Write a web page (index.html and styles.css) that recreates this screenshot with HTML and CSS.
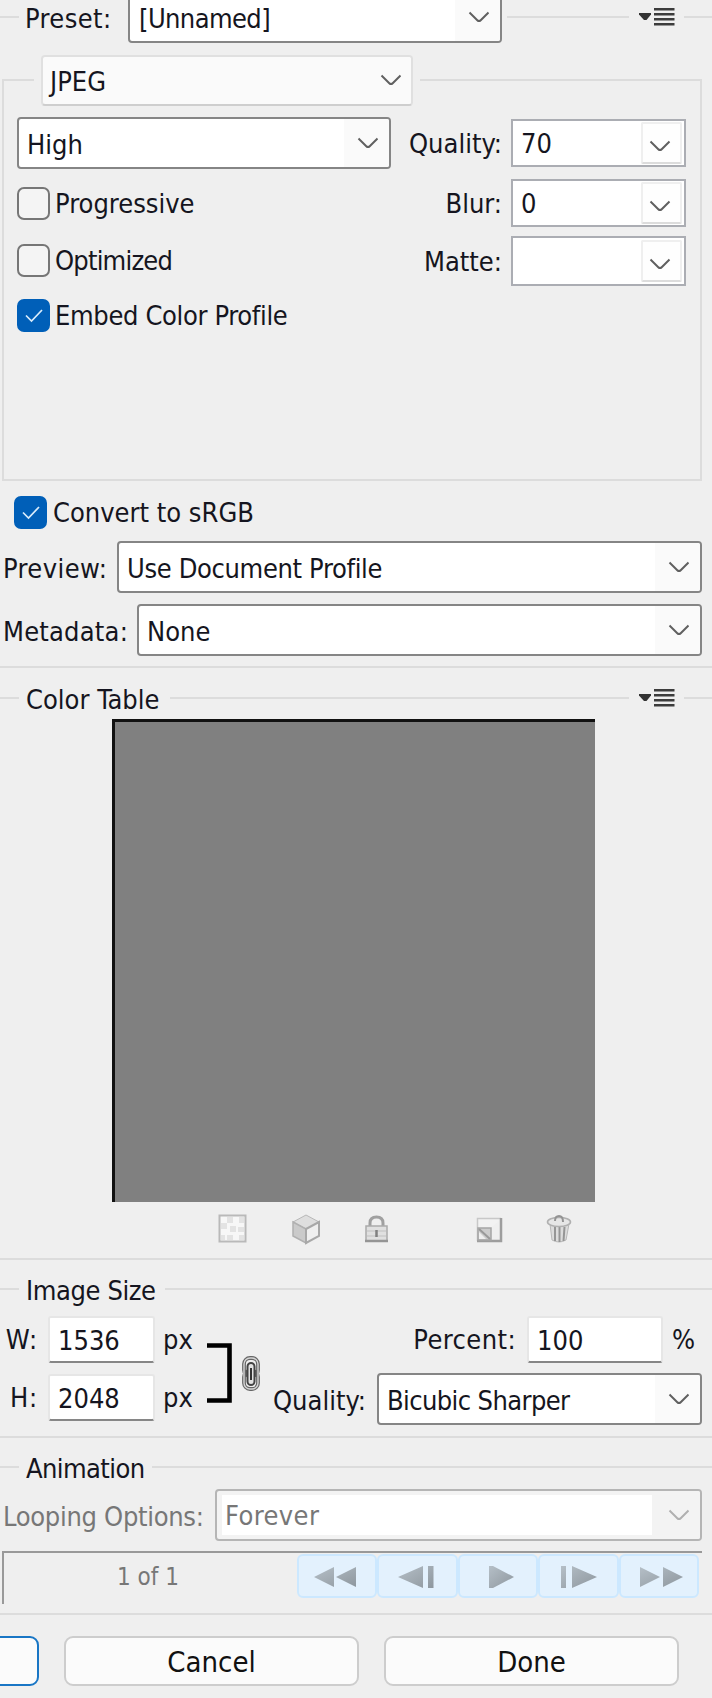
FILE: index.html
```html
<!DOCTYPE html>
<html lang="en">
<head>
    <meta charset="UTF-8">
    <meta name="viewport" content="width=device-width, initial-scale=1.0">
    <title>Save for Web</title>
    <link rel="stylesheet" href="styles.css">
</head>
<body>
    <!-- shared icons -->
    <svg class="defs" width="0" height="0">
        <symbol id="chevron" viewBox="0 0 22 13">
            <path d="M1.5 1.5L9.3 9.2Q11 10.9 12.7 9.2L20.5 1.5" fill="none" stroke="currentColor" stroke-width="2"/>
        </symbol>
        <symbol id="check" viewBox="0 0 18 14">
            <path d="M1 6.5L6.5 12L17 1" fill="none" stroke="#d9ecfb" stroke-width="1.7"/>
        </symbol>
        <symbol id="menu" viewBox="0 0 36 20">
            <path d="M0 6H12V7.5L7.5 13H5L0 7.5Z" fill="#333"/>
            <path d="M15 2.2H35.5M15 7.2H35.5M15 12.2H35.5M15 17.2H35.5" stroke="#3c3c3c" stroke-width="2.6"/>
        </symbol>
        <linearGradient id="metal" x1="0" y1="0" x2="1" y2="1">
            <stop offset="0" stop-color="#b5bfc7"/>
            <stop offset="1" stop-color="#8e979e"/>
        </linearGradient>
    </svg>

    <div class="panel">
        <div class="title-row preset-row">
            <span class="rule rule-start"></span>
            <span class="preset-label">Preset:</span>
            <div class="select preset-select">
                <span class="value">[Unnamed]</span>
                <span class="arrow"><svg><use href="#chevron"/></svg></span>
            </div>
            <span class="rule"></span>
            <svg class="menu-icon"><use href="#menu"/></svg>
            <span class="rule rule-end"></span>
        </div>

        <div class="format-group">
            <div class="format-legend">
                <div class="select flat">
                    <span class="value">JPEG</span>
                    <span class="arrow"><svg><use href="#chevron"/></svg></span>
                </div>
            </div>
            <div class="format-body">
                <div class="format-left">
                    <div class="select">
                        <span class="value">High</span>
                        <span class="arrow"><svg><use href="#chevron"/></svg></span>
                    </div>
                    <div class="check-row progressive"><span class="checkbox"></span><span>Progressive</span></div>
                    <div class="check-row optimized"><span class="checkbox"></span><span>Optimized</span></div>
                    <div class="check-row embed">
                        <span class="checkbox checked"><svg><use href="#check"/></svg></span>
                        <span>Embed Color Profile</span>
                    </div>
                </div>
                <div class="format-right">
                    <div class="spin-row">
                        <span>Quality:</span>
                        <div class="spin"><span>70</span><span class="spin-btn"><svg><use href="#chevron"/></svg></span></div>
                    </div>
                    <div class="spin-row blur-row">
                        <span>Blur:</span>
                        <div class="spin"><span>0</span><span class="spin-btn"><svg><use href="#chevron"/></svg></span></div>
                    </div>
                    <div class="spin-row matte-row">
                        <span>Matte:</span>
                        <div class="spin"><span></span><span class="spin-btn"><svg><use href="#chevron"/></svg></span></div>
                    </div>
                </div>
            </div>
        </div>

        <div class="check-row convert">
            <span class="checkbox checked"><svg><use href="#check"/></svg></span>
            <span>Convert to sRGB</span>
        </div>
        <div class="field-row preview-row">
            <span class="label preview-label">Preview:</span>
            <div class="select">
                <span class="value profile">Use Document Profile</span>
                <span class="arrow"><svg><use href="#chevron"/></svg></span>
            </div>
        </div>
        <div class="field-row metadata-row">
            <span class="label metadata-label">Metadata:</span>
            <div class="select">
                <span class="value">None</span>
                <span class="arrow"><svg><use href="#chevron"/></svg></span>
            </div>
        </div>

        <div class="section color-section">
            <div class="title-row">
                <span class="rule rule-start"></span>
                <span class="title color-title">Color Table</span>
                <span class="rule"></span>
                <svg class="menu-icon"><use href="#menu"/></svg>
                <span class="rule rule-end"></span>
            </div>
            <div class="color-table"></div>
            <div class="table-tools">
                <svg class="tool" width="30" height="32" viewBox="0 0 30 32">
                    <rect x="1.5" y="2.5" width="26" height="26" fill="#f7f7f7" stroke="#b9b9b9" stroke-width="2"/>
                    <path d="M9 4h6v6H9zM21 4h5v6h-5zM3 10h6v6H3zM9 22h6v5H9zM21 22h5v5h-5zM3 22h4v5H3zM12 13h6v6h-6zM20 14h6v5h-6z" fill="#e3e3e3"/>
                </svg>
                <svg class="tool cube" width="30" height="32" viewBox="0 0 30 32">
                    <path d="M15 2L28 9L15 16L2 9Z" fill="#dedede" stroke="#b8b8b8"/>
                    <path d="M2 9L15 16V30L2 23Z" fill="#cacaca" stroke="#b0b0b0" stroke-width="1.5"/>
                    <path d="M15 16L28 9V23L15 30Z" fill="#efefef" stroke="#a8a8a8" stroke-width="2"/>
                </svg>
                <svg class="tool lock" width="26" height="32" viewBox="0 0 26 32">
                    <path d="M6 14V10Q6 4 12.5 4T19 10V14" fill="none" stroke="#a0a0a0" stroke-width="3"/>
                    <rect x="2" y="13" width="21" height="15" fill="#e0e0e0" stroke="#ababab" stroke-width="1.5"/>
                    <path d="M3 18H22M3 23H22" stroke="#cacaca" stroke-width="1.5"/>
                    <path d="M1 28H24" stroke="#959595" stroke-width="2.5"/>
                    <path d="M12.5 17V24" stroke="#808080" stroke-width="2.5"/>
                </svg>
                <svg class="tool new" width="28" height="32" viewBox="0 0 28 32">
                    <path d="M1.5 28V5.5H25" fill="#f2f2f2" stroke="#c8c8c8" stroke-width="1.5"/>
                    <path d="M25 5V28H1" fill="none" stroke="#9d9d9d" stroke-width="2.5"/>
                    <path d="M2 15H15V27H2Z" fill="#ccc" stroke="#a5a5a5" stroke-width="1.5"/>
                    <path d="M3 16L14 26" stroke="#999" stroke-width="2"/>
                    <path d="M3 19V26H10Z" fill="#eee"/>
                </svg>
                <svg class="tool trash" width="26" height="32" viewBox="0 0 26 32">
                    <path d="M4 11L6 27Q13 31 20 27L23 11Z" fill="#dcdcdc" stroke="#b8b8b8"/>
                    <path d="M9 14V28M13.5 14V29M18.500 14L17.500 28" stroke="#959595" stroke-width="2"/>
                    <ellipse cx="13" cy="9" rx="11.5" ry="4.5" fill="#e6e6e6" stroke="#b0b0b0" stroke-width="1.6"/>
                    <path d="M9 8Q9 3 13 3T17 9" fill="none" stroke="#939393" stroke-width="2"/>
                </svg>
            </div>
        </div>

        <div class="section size-section">
            <div class="title-row">
                <span class="rule rule-start"></span>
                <span class="title size-title">Image Size</span>
                <span class="rule"></span>
            </div>
            <div class="size-body">
                <div class="dimensions">
                    <div class="dim-row"><span class="dim-label">W:</span><div class="input">1536</div><span>px</span></div>
                    <div class="dim-row"><span class="dim-label">H:</span><div class="input">2048</div><span>px</span></div>
                </div>
                <svg class="link" width="56" height="66" viewBox="0 0 56 66">
                    <path d="M0 5.500H22.500V60.500H0" fill="none" stroke="#000" stroke-width="4.600"/>
                    <rect x="37" y="18" width="14" height="18" rx="6" fill="none" stroke="#666" stroke-width="3.800"/>
                    <rect x="37" y="31" width="14" height="18" rx="6" fill="none" stroke="#666" stroke-width="3.800"/>
                    <rect x="37" y="18" width="14" height="31" rx="6" fill="none" stroke="#d5d5d5" stroke-width="1.400"/>
                    <rect x="40.500" y="23" width="7" height="22" rx="3.500" fill="#e2e2e2" stroke="#444" stroke-width="2"/>
                    <path d="M44 28V40" stroke="#333" stroke-width="2"/>
                </svg>
                <div class="resample">
                    <div class="percent-row">
                        <span class="percent-label">Percent:</span>
                        <div class="input">100</div>
                        <span class="percent-sign">%</span>
                    </div>
                    <div class="quality-row">
                        <span class="label">Quality:</span>
                        <div class="select">
                            <span class="value sharper">Bicubic Sharper</span>
                            <span class="arrow"><svg><use href="#chevron"/></svg></span>
                        </div>
                    </div>
                </div>
            </div>
        </div>

        <div class="section animation-section">
            <div class="title-row">
                <span class="rule rule-start"></span>
                <span class="title animation-title">Animation</span>
                <span class="rule"></span>
            </div>
            <div class="field-row looping-row">
                <span class="label looping-label">Looping Options:</span>
                <div class="select disabled">
                    <span class="value">Forever</span>
                    <span class="arrow"><svg><use href="#chevron"/></svg></span>
                </div>
            </div>
            <div class="player">
                <span class="frame-count">1 of 1</span>
                <div class="controls">
                    <span class="control"><svg viewBox="0 0 80 44"><path d="M17 22L37 12V32ZM39 22L59 12V32Z"/></svg></span>
                    <span class="control"><svg viewBox="0 0 80 44"><path d="M21 22L46 11V33ZM51 11H56.500V33H51Z"/></svg></span>
                    <span class="control"><svg viewBox="0 0 80 44"><path d="M31 11H35L56 22L35 33H31Z"/></svg></span>
                    <span class="control"><svg viewBox="0 0 80 44"><path d="M23 11H28V33H23ZM34 11L59 22L34 33Z"/></svg></span>
                    <span class="control"><svg viewBox="0 0 80 44"><path d="M21 12L41 22L21 32ZM44 12L64 22L44 32Z"/></svg></span>
                </div>
            </div>
        </div>

        <div class="section buttons">
            <div class="button primary"></div>
            <div class="button">Cancel</div>
            <div class="button">Done</div>
        </div>
    </div>
</body>
</html>
```
FILE: styles.css
```css
* {
    margin: 0;
    padding: 0;
    box-sizing: border-box;
}

body {
    font-family: 'DejaVu Sans Condensed', 'DejaVu Sans', sans-serif;
    font-stretch: condensed;
    font-size: 27px;
    color: #151520;
    background: #efefef;
    overflow: hidden;
}

svg {
    display: block;
    flex: none;
}

.defs {
    position: absolute;
}

.panel {
    width: 712px;
    height: 1698px;
    overflow: hidden;
    white-space: nowrap;
}

/* selects */
.select {
    height: 52px;
    flex: 1;
    display: flex;
    border: 2px solid #858585;
    border-radius: 4px;
    background: #fff;
    overflow: hidden;
}

.value {
    flex: 1;
    padding-left: 8px;
    line-height: 51px;
}

.profile {
    letter-spacing: -0.35px;
}

.sharper {
    letter-spacing: -0.6px;
}

.arrow {
    width: 45px;
    background: #fafafa;
    color: #606060;
    display: flex;
    align-items: center;
    justify-content: center;
    padding-left: 3px;
}

.arrow svg,
.spin-btn svg {
    width: 22px;
    height: 13px;
}

.select.flat {
    height: 51px;
    background: #fafafa;
    border-color: #e0e0e0;
    border-bottom-color: #cecece;
}

.flat .value {
    padding-left: 7px;
    line-height: 49px;
}

.flat .arrow {
    padding-left: 5px;
}

.select.disabled {
    background: #f3f3f3;
    border-color: #b5b5b5;
    color: #777;
}

.disabled .value {
    margin: 4px 0 4px 5px;
    padding-left: 3px;
    background: #fff;
    line-height: 42px;
    letter-spacing: 0.4px;
}

.disabled .arrow {
    width: 48px;
    padding-left: 6px;
    background: #f3f3f3;
    color: #b0b0b0;
}

/* section titles */
.title-row {
    display: flex;
    align-items: center;
    height: 34px;
}

.rule {
    flex: 1;
    height: 2px;
    background: #dcdcdc;
}

.rule-start {
    flex: none;
    width: 19px;
}

.rule-end {
    flex: none;
    width: 28px;
}

.title {
    flex: none;
    padding: 2px 0 0 7px;
}

.color-title {
    width: 151px;
}

.size-title {
    width: 146px;
    letter-spacing: -0.4px;
}

.animation-title {
    width: 133px;
    letter-spacing: -0.6px;
}

.menu-icon {
    width: 36px;
    height: 20px;
    margin: 0 9px 0 10px;
}

.preset-row .preset-label {
    width: 109px;
    padding: 2px 0 0 6px;
    letter-spacing: 0.4px;
}

.preset-row .preset-select {
    flex: none;
    width: 374px;
    height: 51px;
    margin-right: 5px;
}

.preset-select .value {
    line-height: 49px;
    letter-spacing: -0.6px;
    padding-left: 9px;
}

/* format settings */
.format-group {
    margin: 45px 0 0 2px;
    width: 700px;
    height: 402px;
    border: 2px solid #dcdcdc;
}

.format-legend {
    width: 386px;
    margin: -26px 0 0 30px;
    padding: 0 7px;
    background: #efefef;
    display: flex;
}

.format-body {
    display: flex;
    margin: 11px 10px 0 13px;
}

.format-left {
    width: 374px;
    flex: none;
}

.check-row {
    display: flex;
    align-items: center;
    height: 33px;
}

.checkbox {
    width: 33px;
    height: 33px;
    flex: none;
    margin-right: 5px;
    border: 2px solid #767676;
    border-radius: 7px;
    background: #f4f4f4;
    display: flex;
    align-items: center;
    justify-content: center;
}

.checkbox.checked {
    background: #005fb8;
    border-color: #005fb8;
}

.checkbox svg {
    width: 18px;
    height: 14px;
}

.progressive {
    margin-top: 18px;
}

.optimized {
    margin-top: 24px;
    letter-spacing: -0.8px;
}

.embed {
    margin-top: 22px;
    letter-spacing: -0.35px;
}

.format-right {
    flex: 1;
    padding: 2px 4px 0 0;
}

.spin-row {
    display: flex;
    justify-content: flex-end;
    align-items: center;
    gap: 9px;
}

.spin {
    width: 175px;
    height: 48px;
    border: 2px solid #abadb3;
    background: #fff;
    display: flex;
    justify-content: space-between;
    align-items: center;
    padding: 0 2px 0 8px;
}

.spin-btn {
    width: 41px;
    height: 42px;
    border: 2px solid #efefef;
    border-bottom-color: #dcdcdc;
    border-radius: 2px;
    background: #fefefe;
    color: #606060;
    display: flex;
    align-items: center;
    justify-content: center;
    padding: 6px 3px 0 0;
}

.blur-row {
    margin-top: 12px;
}

.matte-row {
    margin-top: 9px;
}

.matte-row .spin {
    height: 50px;
}

/* profile and metadata */
.convert {
    margin: 15px 0 0 14px;
}

.convert .checkbox {
    margin-right: 6px;
}

.field-row {
    display: flex;
    align-items: center;
    padding: 0 10px 0 3px;
}

.label {
    flex: none;
    padding-top: 2px;
}

.preview-row {
    margin-top: 12px;
}

.preview-label {
    width: 114px;
    letter-spacing: 0.4px;
}

.metadata-row {
    margin-top: 11px;
}

.metadata-label {
    width: 134px;
    letter-spacing: 0.2px;
}

.section {
    border-top: 2px solid #dcdcdc;
}

/* color table */
.color-section {
    height: 592px;
    margin-top: 10px;
    padding-top: 13px;
}

.color-table {
    width: 483px;
    height: 483px;
    margin: 4px 0 0 112px;
    background: #808080;
    border-top: 3px solid #111;
    border-left: 3px solid #111;
}

.table-tools {
    display: flex;
    margin: 11px 0 0 218px;
}

.cube {
    margin-left: 43px;
}

.lock {
    margin-left: 43px;
}

.new {
    margin-left: 86px;
}

.trash {
    margin-left: 42px;
}

/* image size */
.size-section {
    height: 178px;
    padding-top: 12px;
}

.size-body {
    display: flex;
    padding: 10px 10px 0 0;
}

.dimensions {
    width: 207px;
    flex: none;
    display: grid;
    row-gap: 11px;
    align-content: start;
}

.dim-row {
    display: flex;
    align-items: center;
}

.dim-label {
    width: 38px;
    margin-right: 10px;
    text-align: right;
    letter-spacing: 0.8px;
}

.input {
    width: 107px;
    height: 47px;
    padding-left: 8px;
    line-height: 46px;
    background: #fff;
    border: 2px solid #e6e6e6;
    border-bottom-color: #868686;
    border-radius: 3px;
}

.dim-row .input {
    margin-right: 8px;
}

.link {
    margin-top: 24px;
}

.resample {
    flex: 1;
    padding-left: 10px;
}

.percent-row {
    display: flex;
    align-items: center;
    justify-content: flex-end;
    padding-right: 3px;
}

.percent-label {
    letter-spacing: 0.4px;
}

.percent-row .input {
    width: 136px;
    margin: 0 9px 0 11px;
}

.percent-sign {
    width: 27px;
}

.quality-row {
    display: flex;
    align-items: center;
    margin-top: 10px;
}

.quality-row .label {
    width: 104px;
}

/* animation */
.animation-section {
    height: 177px;
    padding-top: 12px;
}

.looping-row {
    margin-top: 5px;
    color: #777;
}

.looping-label {
    width: 212px;
    letter-spacing: -0.3px;
}

.player {
    display: flex;
    width: 700px;
    height: 53px;
    margin: 10px 0 0 2px;
    border-top: 2px solid #999;
    border-left: 2px solid #999;
}

.frame-count {
    width: 293px;
    padding: 10px 5px 0 0;
    text-align: center;
    font-size: 24px;
    color: #777;
}

.controls {
    display: flex;
    padding-top: 1px;
}

.control {
    width: 80.4px;
    height: 44px;
    border: 2px solid #cce8ff;
    border-radius: 6px;
    background: #e3f1fd;
    overflow: hidden;
}

.control svg {
    width: 80px;
    height: 44px;
    margin: -1px 0 0 -2px;
    fill: url(#metal);
}

/* bottom buttons */
.buttons {
    display: flex;
    gap: 25px;
    padding-top: 21px;
}

.button {
    width: 295px;
    height: 50px;
    border: 2px solid #cdcdcd;
    border-radius: 9px;
    background: #fbfbfb;
    text-align: center;
    line-height: 48px;
    font-size: 29px;
    color: #111;
}

.button.primary {
    width: 60px;
    margin-left: -21px;
    border-color: #1976c5;
}
```
